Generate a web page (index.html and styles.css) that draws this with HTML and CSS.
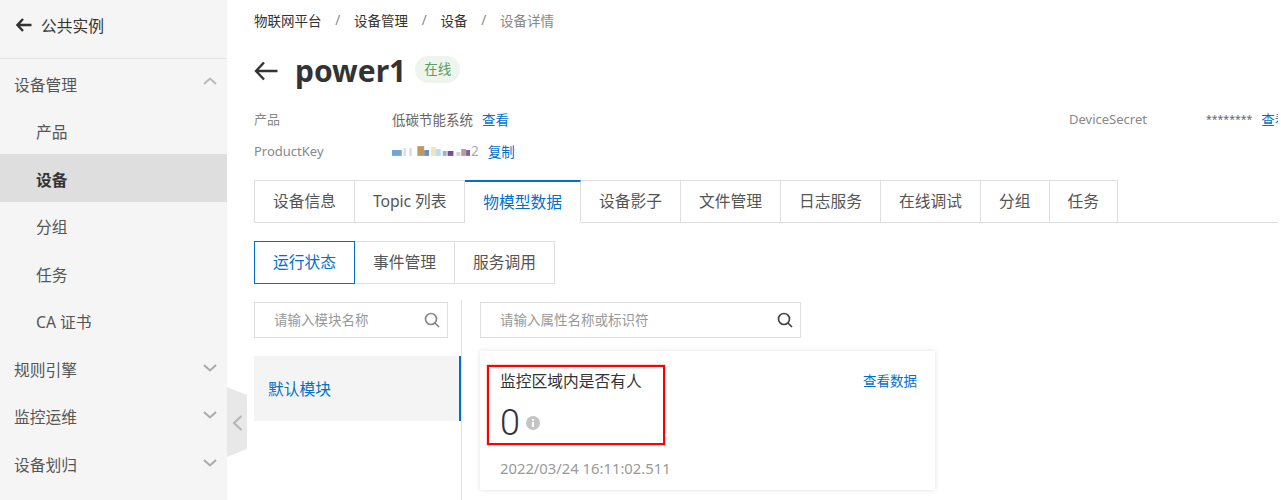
FILE: index.html
```html
<!DOCTYPE html>
<html lang="zh-CN">
<head>
    <meta charset="UTF-8">
    <title>设备详情</title>
    <link rel="stylesheet" href="styles.css">
</head>
<body>

    <!-- 侧边栏 -->
    <aside class="sidebar">
        <div class="sidebar-back">
            <svg class="back-icon" width="16" height="14" viewBox="0 0 16 14"><path d="M7 1 1.500 7 7 13M2 7h13.500" fill="none" stroke="#333" stroke-width="2.400"/></svg>
            <span>公共实例</span>
        </div>
        <nav class="menu">
            <div class="menu-item">设备管理
                <svg class="chevron chevron-up" width="14" height="8" viewBox="0 0 14 8"><path d="M1 7 7 1.500 13 7" fill="none" stroke="#bbb" stroke-width="2"/></svg>
            </div>
            <div class="menu-item sub">产品</div>
            <div class="menu-item sub active">设备</div>
            <div class="menu-item sub">分组</div>
            <div class="menu-item sub">任务</div>
            <div class="menu-item sub">CA 证书</div>
            <div class="menu-item">规则引擎
                <svg class="chevron" width="14" height="8" viewBox="0 0 14 8"><path d="M1 1 7 6.500 13 1" fill="none" stroke="#aaa" stroke-width="2"/></svg>
            </div>
            <div class="menu-item">监控运维
                <svg class="chevron" width="14" height="8" viewBox="0 0 14 8"><path d="M1 1 7 6.500 13 1" fill="none" stroke="#aaa" stroke-width="2"/></svg>
            </div>
            <div class="menu-item">设备划归
                <svg class="chevron" width="14" height="8" viewBox="0 0 14 8"><path d="M1 1 7 6.500 13 1" fill="none" stroke="#aaa" stroke-width="2"/></svg>
            </div>
        </nav>
        <!-- 折叠按钮 -->
        <svg class="collapse" width="20" height="70" viewBox="0 0 20 70">
            <path d="M0 0 20 8V62L0 70Z" fill="#e8e8e8"/>
            <path d="M14.500 29 7 36 14.500 43" fill="none" stroke="#b5b5b5" stroke-width="2"/>
        </svg>
    </aside>

    <main class="main">
        <div class="breadcrumb">
            <span>物联网平台</span><i>/</i><span>设备管理</span><i>/</i><span>设备</span><i>/</i><span class="current">设备详情</span>
        </div>

        <div class="title-row">
            <svg width="24" height="20" viewBox="0 0 24 20"><path d="M10 1.500 2 10l8 8.500M2 10h21.500" fill="none" stroke="#333" stroke-width="2.400"/></svg>
            <h1>power1</h1>
            <span class="status">在线</span>
        </div>

        <div class="meta">
            <span class="meta-label">产品</span>
            <span class="meta-value">低碳节能系统<a class="link">查看</a></span>
            <span class="meta-label">DeviceSecret</span>
            <span class="meta-value"><span class="secret">********</span><a class="link">查看</a></span>
            <span class="meta-label">ProductKey</span>
            <span class="meta-value">
                <!-- 打码的 key -->
                <svg class="masked" width="79" height="14" viewBox="0 0 81 14">
                    <g class="masked-bits">
                        <rect x="0" y="6" width="10" height="6" fill="#6ea6d6"/>
                        <rect x="12" y="4" width="2" height="8" fill="#cfd6e4"/>
                        <rect x="18" y="4" width="2" height="8" fill="#d5d5d5"/>
                        <rect x="26" y="2" width="7" height="10" fill="#c09a5c"/>
                        <rect x="33" y="6" width="5" height="6" fill="#6f8abb"/>
                        <rect x="40" y="3" width="5" height="9" fill="#f0e4bd"/>
                        <rect x="45" y="5" width="5" height="7" fill="#bcdcf6"/>
                        <rect x="52" y="7" width="4" height="5" fill="#a9a9cf"/>
                        <rect x="57" y="7" width="6" height="5" fill="#6f4fa0"/>
                        <rect x="66" y="8" width="4" height="4" fill="#d0d0e4"/>
                        <rect x="71" y="5" width="5" height="7" fill="#b89a9a"/>
                        <rect x="76" y="6" width="4" height="6" fill="#7f5f98"/>
                    </g>
                </svg><span class="masked-end">2</span><a class="link">复制</a>
            </span>
        </div>

        <div class="tabs">
            <div class="tab">设备信息</div>
            <div class="tab tab-latin">Topic 列表</div>
            <div class="tab active">物模型数据</div>
            <div class="tab">设备影子</div>
            <div class="tab">文件管理</div>
            <div class="tab">日志服务</div>
            <div class="tab">在线调试</div>
            <div class="tab">分组</div>
            <div class="tab">任务</div>
        </div>

        <div class="subtabs">
            <div class="subtab active">运行状态</div>
            <div class="subtab">事件管理</div>
            <div class="subtab">服务调用</div>
        </div>

        <div class="panel">
            <div class="modules">
                <div class="search search-module">
                    <input type="text" placeholder="请输入模块名称">
                    <svg width="16" height="16" viewBox="0 0 16 16"><circle cx="7" cy="7" r="5.500" fill="none" stroke="#888" stroke-width="1.700"/><path d="m11 11 4 4" stroke="#888" stroke-width="1.700"/></svg>
                </div>
                <div class="module-item">默认模块</div>
            </div>

            <div class="props">
                <div class="search search-prop">
                    <input type="text" placeholder="请输入属性名称或标识符">
                    <svg width="16" height="16" viewBox="0 0 16 16"><circle cx="7" cy="7" r="5.500" fill="none" stroke="#444" stroke-width="1.700"/><path d="m11 11 4 4" stroke="#444" stroke-width="1.700"/></svg>
                </div>

                <div class="card">
                    <div class="card-head">
                        <span class="card-title">监控区域内是否有人</span>
                        <a class="link card-link">查看数据</a>
                    </div>
                    <div class="card-value">
                        <span class="value-num">0</span>
                        <svg width="14" height="14" viewBox="0 0 14 14"><circle cx="7" cy="7" r="7" fill="#c4c4c4"/><path d="M7 3v1.800M7 6v5" stroke="#fff" stroke-width="2"/></svg>
                    </div>
                    <div class="card-time">2022/03/24 16:11:02.511</div>
                    <!-- 截图上的红框标注 -->
                    <div class="red-box"></div>
                </div>
            </div>
        </div>
    </main>

</body>
</html>
```

FILE: styles.css
```css
/* 基础 */
html, body {
    height: 100%;
}

body {
    margin: 0;
    padding-right: 3px;
    box-sizing: border-box;
    display: flex;
    overflow: hidden;
    background-color: #fff;
    color: #333;
    font-family: "Noto Sans", "Noto Sans CJK SC", sans-serif;
}

/* 侧边栏 */
.sidebar {
    position: relative;
    flex: 0 0 227px;
    background-color: #f5f5f5;
    font-size: 15.75px;
}

.sidebar-back {
    display: flex;
    align-items: center;
    gap: 9px;
    height: 59px;
    padding: 0 0 8px 16px;
    box-sizing: border-box;
    border-bottom: 1px solid #e3e3e3;
}

.menu-item {
    display: flex;
    align-items: center;
    justify-content: space-between;
    height: 47.5px;
    padding: 3px 10px 0 14px;
    box-sizing: border-box;
    color: #555;
}

.menu-item.sub {
    padding-left: 36px;
}

.menu-item.active {
    background-color: #dedede;
    color: #333;
    font-weight: 700;
}

.chevron {
    margin-bottom: 3px;
}

.chevron-up {
    margin-bottom: 7px;
}

.collapse {
    position: absolute;
    left: 100%;
    top: 387px;
}

/* 主体 */
.main {
    flex: 1;
    min-width: 0;
    padding-left: 27px;
    overflow: hidden;
}

.breadcrumb {
    display: flex;
    align-items: center;
    height: 20px;
    margin-top: 10px;
    font-size: 13.5px;
}

.breadcrumb i {
    margin: 0 13.75px;
    color: #888;
    font-style: normal;
}

.breadcrumb .current {
    color: #888;
}

.title-row {
    display: flex;
    align-items: center;
    height: 44px;
    margin-top: 19px;
}

.title-row h1 {
    margin: 0 9px 0 17px;
    font-size: 30px;
    font-weight: 700;
    line-height: 44px;
}

.status {
    padding: 0 9px;
    border-radius: 14px;
    background-color: #edf5ec;
    color: #5f9a63;
    font-size: 13.5px;
    line-height: 27px;
    margin-bottom: 4px;
}

.meta {
    display: grid;
    grid-template-columns: 138px 677px 137px 1fr;
    grid-auto-rows: 32.5px;
    align-items: center;
    margin-top: 9.5px;
    font-size: 13px;
    white-space: nowrap;
}

.meta-label {
    color: #888;
}

.meta-value {
    display: flex;
    align-items: center;
    color: #666;
    font-size: 13.5px;
}

.secret {
    font-size: 10.5px;
}

.masked-bits {
    filter: blur(0.8px);
}

.masked-end {
    color: #a9a9b8;
}

.link {
    margin-left: 9px;
    color: #0070cc;
}

/* 一级 tab */
.tabs {
    display: flex;
    height: 43px;
    margin-top: 12.5px;
    box-sizing: border-box;
    border-bottom: 1px solid #dedede;
    font-size: 15.75px;
}

.tab {
    display: flex;
    align-items: center;
    height: 43px;
    padding: 0 18px 2px;
    box-sizing: border-box;
    border: 1px solid #dedede;
    border-left: 0;
    color: #555;
    white-space: nowrap;
}

.tab:first-child {
    border-left: 1px solid #dedede;
}

.tab-latin {
    letter-spacing: -0.1px;
}

.tab.active {
    border-top: 2px solid #0070cc;
    border-bottom-color: #fff;
    color: #0070cc;
}

/* 二级 tab */
.subtabs {
    display: flex;
    margin-top: 18px;
    font-size: 15.75px;
}

.subtab {
    display: flex;
    align-items: center;
    height: 43px;
    padding: 0 18px 2px;
    box-sizing: border-box;
    border: 1px solid #dedede;
    border-left: 0;
    color: #555;
    white-space: nowrap;
}

.subtab.active {
    border: 1px solid #0070cc;
    color: #0070cc;
}

/* 模块和属性 */
.panel {
    display: flex;
    margin-top: 16px;
    height: 200px;
}

.modules {
    flex: 0 0 207px;
    padding-top: 2px;
    border-right: 1px solid #e3e3e3;
}

.search {
    display: flex;
    align-items: center;
    height: 36px;
    padding: 0 7px 0 19px;
    box-sizing: border-box;
    border: 1px solid #dedede;
}

.search input {
    flex: 1;
    min-width: 0;
    padding: 0;
    border: none;
    outline: none;
    background: none;
    font-family: inherit;
    font-size: 13.5px;
}

.search input::placeholder {
    color: #999;
}

.search-module {
    width: 194px;
}

.search-prop {
    width: 321px;
}

.module-item {
    display: flex;
    align-items: center;
    height: 65px;
    margin-top: 18px;
    padding-left: 14px;
    border-right: 2px solid #0070cc;
    background-color: #f4f4f4;
    color: #0070cc;
    font-size: 15.75px;
}

.props {
    padding: 2px 0 0 18px;
}

.card {
    position: relative;
    width: 455px;
    height: 139px;
    margin-top: 13px;
    padding: 17px 18px 0 20px;
    box-sizing: border-box;
    box-shadow: 0 0 5px rgba(0, 0, 0, 0.12);
}

.card-head {
    display: flex;
    align-items: center;
    justify-content: space-between;
    height: 24px;
}

.card-title {
    color: #333;
    font-size: 15.75px;
}

.card-link {
    font-size: 13.5px;
}

.card-value {
    display: flex;
    align-items: center;
    gap: 6px;
    height: 44px;
    margin-top: 9px;
}

.value-num {
    font-family: Roboto, sans-serif;
    font-size: 36px;
    font-weight: 300;
    line-height: 44px;
}

.card-time {
    margin-top: 12px;
    color: #999;
    font-size: 14.8px;
    line-height: 22px;
}

.red-box {
    position: absolute;
    left: 7px;
    top: 14px;
    width: 178px;
    height: 80px;
    box-sizing: border-box;
    border: 2px solid #f00;
    box-shadow: 0 0 1px #f00;
}
```
